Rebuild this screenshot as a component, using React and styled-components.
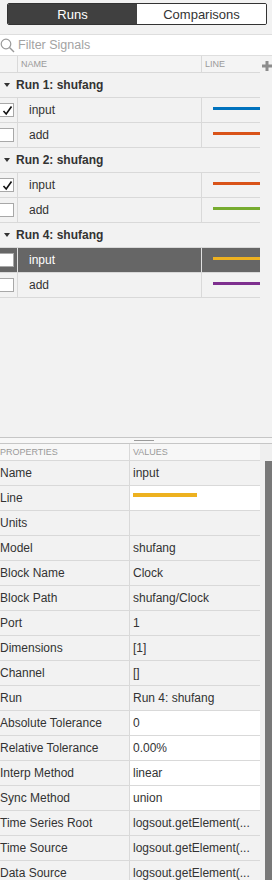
import React from "react";
import styled, { createGlobalStyle } from "styled-components";

const runs = [
  {
    name: "Run 1: shufang",
    signals: [
      { name: "input", checked: true, color: "#0072bd" },
      { name: "add", checked: false, color: "#d95319" },
    ],
  },
  {
    name: "Run 2: shufang",
    signals: [
      { name: "input", checked: true, color: "#d95319" },
      { name: "add", checked: false, color: "#77ac30" },
    ],
  },
  {
    name: "Run 4: shufang",
    signals: [
      { name: "input", checked: false, selected: true, color: "#edb120" },
      { name: "add", checked: false, color: "#7e2f8e" },
    ],
  },
];

// the grid shows the source already shortened
const source = "logsout.getElement(...";

const properties = [
  { label: "Name", value: "input" },
  { label: "Line", swatch: "#edb120", editable: true },
  { label: "Units", value: "" },
  { label: "Model", value: "shufang" },
  { label: "Block Name", value: "Clock" },
  { label: "Block Path", value: "shufang/Clock" },
  { label: "Port", value: "1" },
  { label: "Dimensions", value: "[1]" },
  { label: "Channel", value: "[]" },
  { label: "Run", value: "Run 4: shufang" },
  { label: "Absolute Tolerance", value: "0", editable: true },
  { label: "Relative Tolerance", value: "0.00%", editable: true },
  { label: "Interp Method", value: "linear", editable: true },
  { label: "Sync Method", value: "union", editable: true },
  { label: "Time Series Root", value: source },
  { label: "Time Source", value: source },
  { label: "Data Source", value: source },
];

const App = () => {
  return (
    <Page>
      <GlobalStyle />
      <TopPane>
        <TabBar>
          <Tab active>Runs</Tab>
          <Tab>Comparisons</Tab>
        </TabBar>
        <Filter>
          <svg width="15" height="15" viewBox="0 0 15 15">
            <circle cx="6" cy="6" r="4.8" fill="none" stroke="#9a9a9a" strokeWidth="1.2" />
            <line x1="9.5" y1="9.5" x2="14" y2="14" stroke="#9a9a9a" strokeWidth="1.4" />
          </svg>
          <FilterText>Filter Signals</FilterText>
        </Filter>
        <Panel>
          <Table>
            <HeadRow>
              <HeadCell />
              <HeadCell>NAME</HeadCell>
              <HeadCell last>LINE</HeadCell>
            </HeadRow>
            {runs.map((run) => (
              <React.Fragment key={run.name}>
                <GroupRow>
                  <Caret />
                  {run.name}
                </GroupRow>
                {run.signals.map((s) => (
                  <SignalRow key={s.name} selected={s.selected}>
                    <CheckCell selected={s.selected}>
                      <Checkbox>
                        {s.checked && (
                          <svg width="11" height="11" viewBox="0 0 11 11">
                            <polyline points="1.5,6 4.2,9 9.5,1.5" fill="none" stroke="#111" strokeWidth="1.6" />
                          </svg>
                        )}
                      </Checkbox>
                    </CheckCell>
                    <NameCell selected={s.selected}>{s.name}</NameCell>
                    <LineCell>
                      <Swatch color={s.color} />
                    </LineCell>
                  </SignalRow>
                ))}
              </React.Fragment>
            ))}
          </Table>
          <Gutter>
            <svg width="10" height="10" viewBox="0 0 10 10">
              <rect x="3.5" y="0" width="3" height="10" fill="#8c8c8c" />
              <rect x="0" y="3.5" width="10" height="3" fill="#8c8c8c" />
            </svg>
          </Gutter>
        </Panel>
      </TopPane>
      <Splitter>
        <Handle />
      </Splitter>
      <PropsPane>
        <Table>
          <PropHead>
            <PropHeadCell>PROPERTIES</PropHeadCell>
            <PropHeadCell last>VALUES</PropHeadCell>
          </PropHead>
          {properties.map((p) => (
            <PropRow key={p.label}>
              <PropLabel>{p.label}</PropLabel>
              <PropValue editable={p.editable}>
                {p.swatch ? <PropSwatch color={p.swatch} /> : <ValueText>{p.value}</ValueText>}
              </PropValue>
            </PropRow>
          ))}
        </Table>
        <ScrollBar>
          <ScrollHead />
          <Track>
            <Thumb />
          </Track>
        </ScrollBar>
      </PropsPane>
    </Page>
  );
};

const GlobalStyle = createGlobalStyle`
  html, body {
    margin: 0;
    padding: 0;
    background: #f2f2f2;
  }
  body {
    font-family: "Liberation Sans", Arial, sans-serif;
    font-size: 12px;
    color: #333;
  }
`;

const Page = styled.div`
  width: 272px;
  height: 880px;
  overflow: hidden;
  display: flex;
  flex-direction: column;
  background: #f2f2f2;
`;

const TopPane = styled.div`
  height: 437px;
  flex-shrink: 0;
  display: flex;
  flex-direction: column;
`;

const TabBar = styled.div`
  display: flex;
  height: 22px;
  margin: 3px 5px 0 7px;
  box-sizing: border-box;
  border: 1px solid #333;
  border-radius: 2px;
  overflow: hidden;
`;

const Tab = styled.div`
  flex: 1;
  display: flex;
  align-items: center;
  justify-content: center;
  font-size: 13px;
  background: ${(p) => (p.active ? "#404040" : "#fff")};
  color: ${(p) => (p.active ? "#fff" : "#333")};
`;

const Filter = styled.div`
  display: flex;
  align-items: center;
  gap: 3px;
  height: 22px;
  margin-top: 9px;
  box-sizing: border-box;
  background: #fff;
  border-top: 1px solid #dedede;
  border-bottom: 1px solid #dedede;
`;

const FilterText = styled.span`
  font-size: 12.5px;
  color: #a3a3a3;
`;

const Panel = styled.div`
  display: flex;
`;

const Table = styled.div`
  width: 260px;
  flex-shrink: 0;
  display: flex;
  flex-direction: column;
`;

const Gutter = styled.div`
  width: 12px;
  padding: 4px 0 0 2px;
  box-sizing: border-box;
`;

const HeadRow = styled.div`
  display: grid;
  grid-template-columns: 18px 184px 58px;
  height: 17px;
  flex-shrink: 0;
  box-sizing: border-box;
  background: #f4f4f4;
  border-bottom: 1px solid #d9d9d9;
`;

const HeadCell = styled.div`
  display: flex;
  align-items: center;
  padding-left: 3px;
  font-size: 9px;
  color: #9a9a9a;
  border-right: ${(p) => (p.last ? "none" : "1px solid #d9d9d9")};
`;

const GroupRow = styled.div`
  display: flex;
  align-items: center;
  gap: 6px;
  height: 25px;
  flex-shrink: 0;
  box-sizing: border-box;
  padding-left: 4px;
  border-bottom: 1px solid #d9d9d9;
  font-weight: bold;
  color: #333;
`;

const Caret = styled.span`
  width: 0;
  height: 0;
  border-left: 3px solid transparent;
  border-right: 3px solid transparent;
  border-top: 4px solid #333;
`;

const SignalRow = styled.div`
  display: grid;
  grid-template-columns: 18px 184px 58px;
  height: 25px;
  flex-shrink: 0;
  box-sizing: border-box;
  border-bottom: 1px solid #d9d9d9;
  background: ${(p) => (p.selected ? "#666" : "transparent")};
`;

const CheckCell = styled.div`
  display: flex;
  align-items: center;
  border-right: 1px solid ${(p) => (p.selected ? "#e0e0e0" : "#d9d9d9")};
  overflow: hidden;
`;

const Checkbox = styled.div`
  width: 16px;
  height: 14px;
  margin-left: -2px;
  box-sizing: border-box;
  border: 1px solid #a8a8a8;
  background: #fff;
  display: flex;
  align-items: center;
  justify-content: center;
  padding-left: 2px;
`;

const NameCell = styled.div`
  display: flex;
  align-items: center;
  padding-left: 11px;
  border-right: 1px solid ${(p) => (p.selected ? "#e0e0e0" : "#d9d9d9")};
  color: ${(p) => (p.selected ? "#fff" : "#333")};
`;

const LineCell = styled.div`
  padding: 9px 0 0 11px;
`;

const Swatch = styled.div`
  height: 3px;
  background: ${(p) => p.color};
`;

const Splitter = styled.div`
  height: 7px;
  flex-shrink: 0;
  box-sizing: border-box;
  border-top: 1px solid #c6c6c6;
  border-bottom: 1px solid #c6c6c6;
  background: #f7f7f7;
  display: flex;
  justify-content: center;
  padding-top: 2px;
`;

const Handle = styled.div`
  width: 20px;
  height: 1px;
  margin-left: 15px;
  background: #9a9a9a;
`;

const PropsPane = styled.div`
  flex: 1;
  min-height: 0;
  overflow: hidden;
  display: flex;
`;

const PropHead = styled.div`
  display: grid;
  grid-template-columns: 130px 130px;
  height: 17px;
  flex-shrink: 0;
  box-sizing: border-box;
  background: #f7f7f7;
  border-bottom: 1px solid #d9d9d9;
`;

const PropHeadCell = styled.div`
  display: flex;
  align-items: center;
  padding-left: ${(p) => (p.last ? "3px" : "0")};
  font-size: 9px;
  color: #9a9a9a;
  border-right: ${(p) => (p.last ? "none" : "1px solid #d9d9d9")};
`;

const PropRow = styled.div`
  display: grid;
  grid-template-columns: 130px 130px;
  height: 25px;
  flex-shrink: 0;
`;

const PropLabel = styled.div`
  display: flex;
  align-items: center;
  box-sizing: border-box;
  border-right: 1px solid #d9d9d9;
  border-bottom: 1px solid #d9d9d9;
  white-space: nowrap;
  overflow: hidden;
  color: #333;
`;

const PropValue = styled.div`
  display: flex;
  align-items: center;
  box-sizing: border-box;
  padding: 0 2px 0 3px;
  border-bottom: 1px solid #d9d9d9;
  background: ${(p) => (p.editable ? "#fff" : "transparent")};
  min-width: 0;
`;

const ValueText = styled.span`
  white-space: nowrap;
  color: #333;
`;

const PropSwatch = styled.div`
  width: 64px;
  height: 4px;
  margin-top: -6px;
  background: ${(p) => p.color};
`;

const ScrollBar = styled.div`
  width: 12px;
  display: flex;
  flex-direction: column;
`;

const ScrollHead = styled.div`
  height: 17px;
  flex-shrink: 0;
  background: #efefef;
`;

const Track = styled.div`
  flex: 1;
  display: flex;
  justify-content: flex-end;
  background: #f0f0f0;
`;

const Thumb = styled.div`
  width: 7px;
  background: #787878;
`;

export default App;
